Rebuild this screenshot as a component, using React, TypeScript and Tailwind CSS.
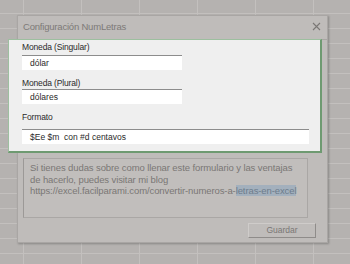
export default function App() {
  return (
    <div
      className="relative w-[350px] h-[264px] overflow-hidden bg-[#b5b2b0] bg-[linear-gradient(to_right,#c3c0be_1px,transparent_1px),linear-gradient(to_bottom,#c3c0be_1px,transparent_1px)] bg-[length:58px_15px] bg-[position:23px_13px] pt-[15px] pl-[17px]"
      style={{ fontFamily: '"Liberation Sans", Arial, sans-serif' }}
    >
      <div className="w-[311px] h-[228px] bg-[#bfbcba] border border-[#a9a6a4] shadow-[1px_1px_2px_rgba(0,0,0,0.25)] flex flex-col">
        {/* title bar */}
        <div className="h-[24px] flex items-center justify-between pl-[5px] pr-[6px] border-b border-[#a9a6a4]">
          <span className="text-[9.5px] text-[#7d7a78] tracking-[-0.2px]">Configuración NumLetras</span>
          <svg width="9" height="9" viewBox="0 0 9 9" className="mt-[-2px]">
            <path d="M1 1 L8 8 M8 1 L1 8" stroke="#7a7775" strokeWidth="1.1" />
          </svg>
        </div>

        {/* highlighted panel */}
        <div className="ml-[-10px] mr-[5px] mt-[-1px] bg-[#efefef] border border-[#9dbf9f] border-r-2 border-b-2 border-r-[#6e9a71] border-b-[#6e9a71] pl-[13px] pt-[2px] pb-[7px] flex flex-col text-[#2a2a2a]">
          <div className="h-[10px] leading-[10px] text-[8.5px] tracking-[-0.15px]">Moneda (Singular)</div>
          <div className="mt-[3px] w-[160px] h-[15px] bg-white border-t border-[#8c8c8c] pl-[8px] text-[8.5px] leading-[14px]">dólar</div>
          <div className="mt-[8px] h-[10px] leading-[10px] text-[8.5px] tracking-[-0.15px]">Moneda (Plural)</div>
          <div className="mt-[1px] w-[160px] h-[15px] bg-white border-t border-[#8c8c8c] pl-[8px] text-[8.5px] leading-[14px]">dólares</div>
          <div className="mt-[8px] h-[10px] leading-[10px] text-[8.5px] tracking-[-0.15px]">Formato</div>
          <div className="mt-[7px] w-[287px] h-[15px] bg-white border-t border-[#8c8c8c] pl-[8px] text-[8.5px] leading-[14px] whitespace-pre">$Ee $m  con #d centavos</div>
        </div>

        {/* info box */}
        <div className="ml-[5px] mr-[19px] mt-[5px] h-[60px] border border-[#aaa7a5] border-l-[#9c9997] bg-[#c1bebc] px-[6px] pt-[3px] text-[9.5px] leading-[11.5px] text-[#7a7775] tracking-[-0.1px]">
          <div>Si tienes dudas sobre como llenar este formulario y las ventajas</div>
          <div>de hacerlo, puedes visitar mi blog</div>
          <div>
            https://excel.facilparami.com/convertir-numeros-a-
            <span className="bg-[#a3b0bd] text-[#6d7c8c]">letras-en-excel</span>
          </div>
        </div>

        {/* button */}
        <div className="flex justify-end mr-[11px] mt-[5px]">
          <div className="w-[68px] h-[15px] border border-[#cfccca] border-r-[#8f8c8a] border-b-[#8f8c8a] flex items-center justify-center text-[8.5px] text-[#7a7775]">
            Guardar
          </div>
        </div>
      </div>
    </div>
  );
}
